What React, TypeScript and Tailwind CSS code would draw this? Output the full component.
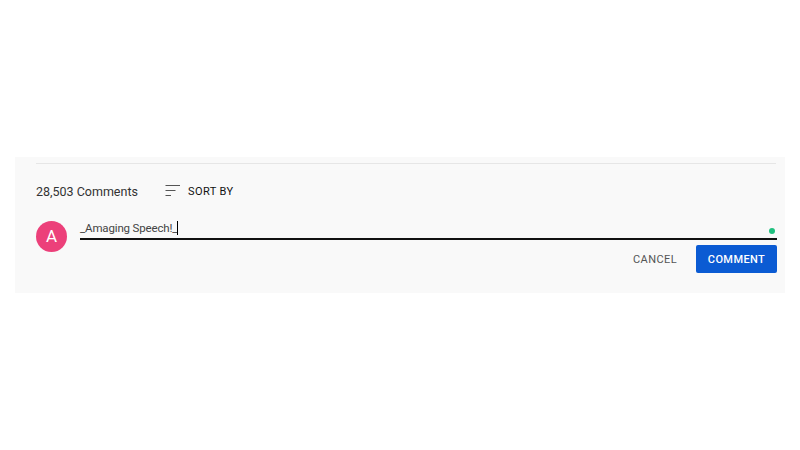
export default function App() {
  return (
    <div className="w-[800px] h-[450px] bg-white pt-[157px] px-[15px] font-['Roboto',sans-serif]">
      <div className="w-[770px] h-[136px] bg-[#f9f9f9] pt-[6px] pl-[21px] pr-[8px]">
        {/* Divider */}
        <div className="h-px bg-[#e6e6e6] mr-px" />

        {/* Header */}
        <div className="flex items-center h-[18px] mt-[19px]">
          <span className="text-[12.5px] leading-[18px] text-[#333] w-[129px]">28,503 Comments</span>
          <svg width="16" height="14" viewBox="0 0 16 14" className="text-[#555] shrink-0 -mt-[2px]">
            <path d="M0.5 1.5H15M0.5 6.5H10.5M0.5 11.5H6" stroke="currentColor" strokeWidth="1" fill="none" />
          </svg>
          <span className="ml-[7px] text-[11px] leading-[18px] tracking-[0.42px] text-[#111] -mt-[1px]">SORT BY</span>
        </div>

        {/* Comment box */}
        <div className="flex mt-[20px]">
          <div className="w-[31px] h-[31px] rounded-full bg-[#ec407a] text-white text-[17px] flex items-center justify-center shrink-0">
            A
          </div>
          <div className="ml-[13px] flex-1">
            <div className="relative h-[19px] border-b-2 border-[#111] flex items-start">
              <span className="text-[11.5px] leading-[15px] tracking-[-0.15px] text-[#444]">_Amaging Speech!_</span>
              <span className="w-px h-[14px] bg-black" />
              <span className="absolute right-[2px] top-[7px] w-[6px] h-[6px] rounded-full bg-[#1fc07f]" />
            </div>
            <div className="flex justify-end items-center mt-[5px]">
              <button className="text-[11px] tracking-[0.42px] text-[#555] mr-[19px] pt-[2px]">CANCEL</button>
              <button className="w-[81px] h-[28px] pt-[2px] bg-[#0b5bd3] rounded-[2px] text-white text-[11px] font-medium tracking-[0.4px]">
                COMMENT
              </button>
            </div>
          </div>
        </div>
      </div>
    </div>
  );
}
